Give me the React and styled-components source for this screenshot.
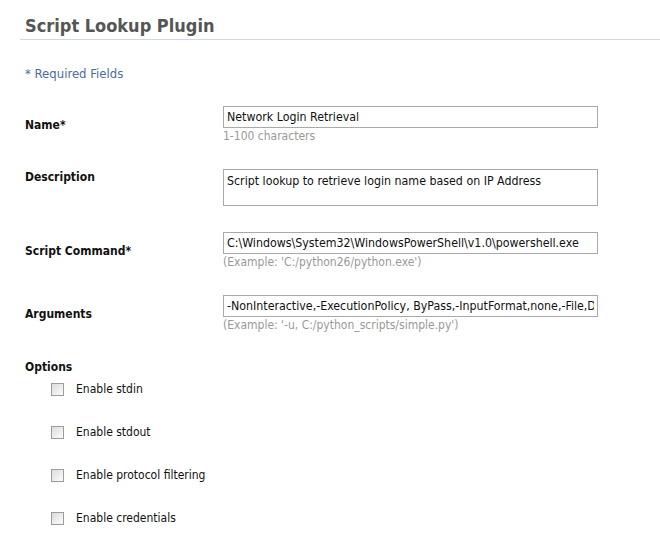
import React from 'react'
import styled, { createGlobalStyle } from 'styled-components'

const GlobalStyle = createGlobalStyle`
  body {
    margin: 0;
    background: #fff;
    font-family: 'DejaVu Sans Condensed', 'DejaVu Sans', sans-serif;
    font-size: 12px;
    color: #111;
  }
`

const Page = styled.div`
  width: 660px;
  height: 545px;
  overflow: hidden;
`

const Header = styled.div`
  margin: 0 0 0 20px;
  padding: 16px 0 3px 5px;
  border-bottom: 1px solid #cfd8e2;
`

const Title = styled.h1`
  margin: 0;
  font-size: 18px;
  line-height: 20px;
  font-weight: bold;
  color: #555;
`

const Required = styled.div`
  margin: 26px 0 0 25px;
  font-size: 13px;
  color: #4b6d9c;
  line-height: 15px;
`

const Form = styled.div`
  display: flex;
  flex-direction: column;
  gap: 26px;
  margin: 25px 0 0 25px;
`

const Row = styled.div`
  display: grid;
  grid-template-columns: 198px 375px;
  align-items: ${(p) => (p.$top ? 'start' : 'center')};
`

const Label = styled.div`
  font-weight: bold;
  line-height: 14px;
  padding-top: ${(p) => (p.$top ? '1px' : '0')};
`

const Field = styled.div`
  display: flex;
  flex-direction: column;
`

const TextInput = styled.input`
  box-sizing: border-box;
  width: 375px;
  height: 22px;
  margin: 0;
  padding: 0 3px;
  border: 1px solid #a9a9a9;
  font-family: inherit;
  font-size: 12.3px;
  color: #111;
  background: #fff;
  outline: none;
`

const TextArea = styled.textarea`
  box-sizing: border-box;
  width: 375px;
  height: 37px;
  margin: 0;
  padding: 4px 3px;
  border: 1px solid #a9a9a9;
  font-family: inherit;
  font-size: 12.3px;
  line-height: 14px;
  color: #111;
  resize: none;
  overflow: hidden;
  outline: none;
`

const Hint = styled.div`
  margin-top: 1px;
  color: #999;
  line-height: 14px;
`

const Options = styled.div`
  margin: 28px 0 0 25px;
`

const OptionList = styled.div`
  display: flex;
  flex-direction: column;
  gap: 29px;
  margin: 8px 0 0 26px;
`

const Option = styled.label`
  display: flex;
  align-items: center;
  gap: 12px;
  line-height: 14px;
`

const Box = styled.span`
  box-sizing: border-box;
  width: 13px;
  height: 13px;
  border: 1px solid #9c9c9c;
  background: linear-gradient(135deg, #dcdcdc, #fbfbfb);
`

const fields = [
  { label: 'Name*', value: 'Network Login Retrieval', hint: '1-100 characters' },
  { label: 'Description', value: 'Script lookup to retrieve login name based on IP Address', area: true },
  {
    label: 'Script Command*',
    value: 'C:\\Windows\\System32\\WindowsPowerShell\\v1.0\\powershell.exe',
    hint: "(Example: 'C:/python26/python.exe')",
  },
  {
    label: 'Arguments',
    value: '-NonInteractive,-ExecutionPolicy, ByPass,-InputFormat,none,-File,D:\\scripts\\getlogin.ps1',
    hint: "(Example: '-u, C:/python_scripts/simple.py')",
  },
]

const options = ['Enable stdin', 'Enable stdout', 'Enable protocol filtering', 'Enable credentials']

export default function App() {
  return (
    <Page>
      <GlobalStyle />
      <Header>
        <Title>Script Lookup Plugin</Title>
      </Header>
      <Required>* Required Fields</Required>
      <Form>
        {fields.map((f) => (
          <Row key={f.label} $top={f.area}>
            <Label $top={f.area}>{f.label}</Label>
            <Field>
              {f.area ? (
                <TextArea readOnly value={f.value} />
              ) : (
                <TextInput readOnly value={f.value} />
              )}
              {f.hint && <Hint>{f.hint}</Hint>}
            </Field>
          </Row>
        ))}
      </Form>
      <Options>
        <Label>Options</Label>
        <OptionList>
          {options.map((o) => (
            <Option key={o}>
              <Box />
              {o}
            </Option>
          ))}
        </OptionList>
      </Options>
    </Page>
  )
}
